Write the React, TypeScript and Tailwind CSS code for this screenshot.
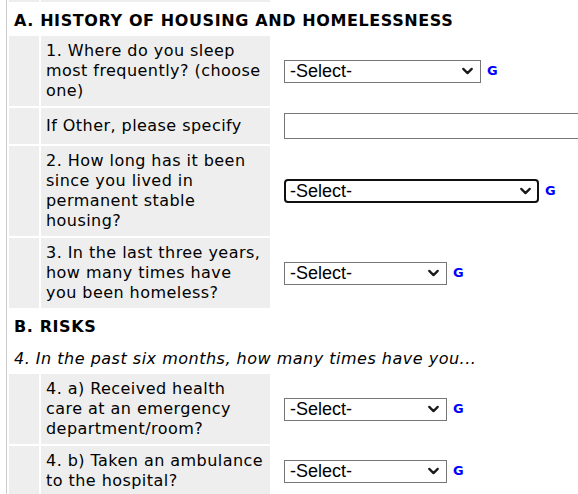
import { ChevronDown } from 'lucide-react';

type SelProps = { width: string; focused?: boolean };

function Select({ width, focused }: SelProps) {
  return (
    <div className="flex items-center">
      <div className={`relative ${width}`}>
        <select
          defaultValue=""
          className={`block w-full appearance-none bg-white text-[18px] leading-[20px] text-black outline-none ${
            focused ? 'border-2 border-[#101010] rounded-[4px] h-[24px] pl-[4px]' : 'border border-[#767676] h-[23px] pl-[5px]'
          }`}
          style={{ fontFamily: '"Liberation Sans", Arial, sans-serif' }}
        >
          <option value="">-Select-</option>
        </select>
        <ChevronDown
          className="pointer-events-none absolute right-[5px] top-1/2 -translate-y-1/2 w-[17px] h-[17px] text-[#1a1a1a]"
          strokeWidth={3.2}
        />
      </div>
      <span className="ml-[6px] text-[13px] font-bold text-[#0000ff]">G</span>
    </div>
  );
}

type Row = { label: string; control: React.ReactNode };

const sectionA: Row[] = [
  { label: '1. Where do you sleep most frequently? (choose one)', control: <Select width="w-[197px]" /> },
  {
    label: 'If Other, please specify',
    control: <input type="text" className="block w-[300px] h-[26px] border border-[#767676] bg-white" />,
  },
  { label: '2. How long has it been since you lived in permanent stable housing?', control: <Select width="w-[255px]" focused /> },
  { label: '3. In the last three years, how many times have you been homeless?', control: <Select width="w-[163px]" /> },
];

const sectionB: Row[] = [
  { label: '4. a) Received health care at an emergency department/room?', control: <Select width="w-[163px]" /> },
  { label: '4. b) Taken an ambulance to the hospital?', control: <Select width="w-[163px]" /> },
];

function QuestionRow({ row }: { row: Row }) {
  return (
    <tr>
      <td className="bg-[#eeeeee]"></td>
      <td className="bg-[#eeeeee] px-[5px] py-[5px] align-middle tracking-[0.45px]">{row.label}</td>
      <td className="pl-[12px] py-[5px] align-middle">{row.control}</td>
    </tr>
  );
}

export default function App() {
  return (
    <div
      className="w-[578px] h-[494px] overflow-hidden bg-white pl-[6px] text-[16px] leading-[20px] text-black"
      style={{ fontFamily: '"DejaVu Sans", Verdana, sans-serif' }}
    >
      <div className="border-l border-[#cccccc] -mt-[2px] min-h-[520px]">
        <table className="w-[571px] table-fixed border-separate border-spacing-[2px]">
          <colgroup>
            <col className="w-[30px]" />
            <col className="w-[229px]" />
            <col />
          </colgroup>
          <tbody>
            <tr>
              <td className="bg-[#eeeeee] h-[2px]"></td>
              <td className="bg-[#eeeeee] h-[2px]"></td>
              <td></td>
            </tr>
            <tr>
              <td colSpan={3} className="px-[5px] pt-[7px] pb-[3px] font-bold tracking-[0.6px] whitespace-nowrap">
                A. HISTORY OF HOUSING AND HOMELESSNESS
              </td>
            </tr>
            {sectionA.map((r) => (
              <QuestionRow key={r.label} row={r} />
            ))}
            <tr>
              <td colSpan={3} className="px-[5px] pt-[7px] pb-[3px] font-bold tracking-[0.6px]">
                B. RISKS
              </td>
            </tr>
            <tr>
              <td colSpan={3} className="px-[5px] pt-[7px] pb-[3px] italic tracking-[0.5px] whitespace-nowrap">
                4. In the past six months, how many times have you...
              </td>
            </tr>
            {sectionB.map((r) => (
              <QuestionRow key={r.label} row={r} />
            ))}
          </tbody>
        </table>
      </div>
    </div>
  );
}
